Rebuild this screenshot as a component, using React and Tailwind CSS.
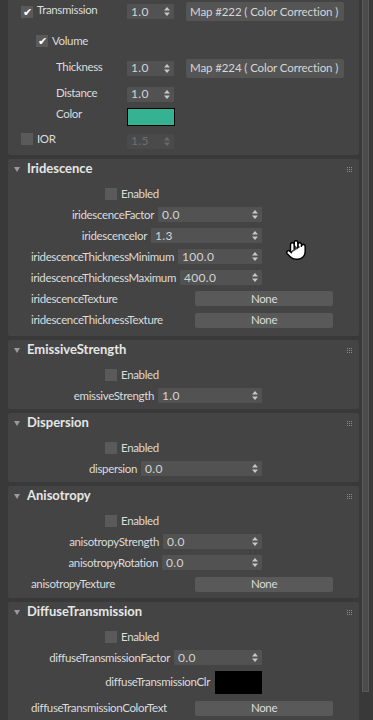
import React from "react";
import { Hand } from "lucide-react";

const font = { fontFamily: "Lato, 'Liberation Sans', sans-serif" };

function Arrows({ dim }) {
  return (
    <svg width="6" height="9" viewBox="0 0 6 9" className="shrink-0">
      <path d="M3 0 L6 3.5 L0 3.5 Z" fill={dim ? "#6a6a6a" : "#c8c8c8"} />
      <path d="M3 9 L6 5.5 L0 5.5 Z" fill={dim ? "#6a6a6a" : "#c8c8c8"} />
    </svg>
  );
}

function Spinner({ w, value, dim }) {
  return (
    <div
      className={`${w} h-[15px] flex items-center justify-between pl-[4px] pr-[4px] rounded-[1px] text-[12px] ${
        dim ? "text-[#6e6e6e] bg-[#4a4a4a]" : "text-[#d4d4d4] bg-[#525252]"
      }`}
    >
      <span className="leading-none tracking-[0.3px]">{value}</span>
      <Arrows dim={dim} />
    </div>
  );
}

function Check({ on }) {
  return (
    <div className="w-[12px] h-[12px] bg-[#5a5a5a] flex items-center justify-center shrink-0">
      {on && <span className="text-[11px] leading-none text-white -mt-[1px]">✔</span>}
    </div>
  );
}

function MapBtn({ children }) {
  return (
    <div className="w-[158px] h-[19px] bg-[#555555] rounded-[2px] flex items-center pl-[4px] text-[11.5px] tracking-[-0.1px] text-[#d6d6d6] whitespace-nowrap">
      {children}
    </div>
  );
}

function NoneBtn() {
  return (
    <div className="w-[138px] h-[15px] bg-[#595959] rounded-[2px] flex items-center justify-center text-[#dcdcdc]">
      None
    </div>
  );
}

function Grip() {
  return (
    <div className="grid grid-cols-3 gap-[1px] mr-[7px]">
      {Array.from({ length: 9 }).map((_, i) => (
        <div key={i} className="w-[1px] h-[1px] bg-[#8a8a8a]" />
      ))}
    </div>
  );
}

function Header({ title }) {
  return (
    <div className="h-[20px] flex items-center justify-between">
      <div className="flex items-center">
        <svg width="6" height="5" viewBox="0 0 6 5" className="ml-[6px] mr-[7px]">
          <path d="M0 0 L6 0 L3 5 Z" fill="#9a9a9a" />
        </svg>
        <span className="font-bold text-[13px] tracking-[0px] text-[#e6e6e6]">{title}</span>
      </div>
      <Grip />
    </div>
  );
}

function Enabled() {
  return (
    <div className="h-[20px] mt-[5px] flex items-center pl-[97px] gap-[4px]">
      <Check />
      <span>Enabled</span>
    </div>
  );
}

function SpinRow({ label, w, value }) {
  return (
    <div className="h-[21px] w-[254px] flex items-center justify-end gap-[4px]">
      <span className="whitespace-nowrap">{label}</span>
      <Spinner w={w} value={value} />
    </div>
  );
}

function TexRow({ label, h = "h-[21px]" }) {
  return (
    <div className={`${h} flex items-center`}>
      <span className="w-[187px] pl-[23px] whitespace-nowrap">{label}</span>
      <NoneBtn />
    </div>
  );
}

function Panel({ title, children, pb }) {
  return (
    <div className={`bg-[#444444] rounded-[2px] ${pb}`}>
      <Header title={title} />
      {children}
    </div>
  );
}

export default function App() {
  return (
    <div
      className="relative w-[373px] h-[720px] bg-[#393939] flex overflow-hidden text-[11.5px] tracking-[-0.35px] text-[#dcdcdc]"
      style={font}
    >
      <div className="w-[351px] ml-[8px] flex flex-col gap-[4px] shrink-0">
        {/* continued panel */}
        <div className="h-[155px] shrink-0 bg-[#444444] rounded-b-[2px]">
          <div className="h-[23px] flex items-center">
            <div className="w-[119px] pl-[13px] flex items-center gap-[4px]">
              <Check on />
              <span className="-mt-[3px]">Transmission</span>
            </div>
            <Spinner w="w-[47px]" value="1.0" />
            <div className="ml-[12px]">
              <MapBtn>Map #222 ( Color Correction )</MapBtn>
            </div>
          </div>
          <div className="h-[20px] mt-[8px] flex items-center pl-[28px] gap-[4px]">
            <Check on />
            <span>Volume</span>
          </div>
          <div className="h-[20px] mt-[7px] flex items-center">
            <span className="w-[119px] pl-[48px] -mt-[2px]">Thickness</span>
            <Spinner w="w-[47px]" value="1.0" />
            <div className="ml-[12px]">
              <MapBtn>Map #224 ( Color Correction )</MapBtn>
            </div>
          </div>
          <div className="h-[20px] mt-[6px] flex items-center">
            <span className="w-[119px] pl-[48px] -mt-[2px]">Distance</span>
            <Spinner w="w-[47px]" value="1.0" />
          </div>
          <div className="h-[26px] flex items-center">
            <span className="w-[119px] pl-[48px] -mt-[6px]">Color</span>
            <div className="w-[48px] h-[18px] bg-[#35b291] border border-black" />
          </div>
          <div className="h-[20px] mt-[1px] flex items-center">
            <div className="w-[119px] pl-[13px] flex items-center gap-[4px] -mt-[4px]">
              <Check />
              <span>IOR</span>
            </div>
            <Spinner w="w-[47px]" value="1.5" dim />
          </div>
        </div>

        <Panel title="Iridescence" pb="pb-[5px]">
          <Enabled />
          <SpinRow label="iridescenceFactor" w="w-[104px]" value="0.0" />
          <SpinRow label="iridescenceIor" w="w-[111px]" value="1.3" />
          <SpinRow label="iridescenceThicknessMinimum" w="w-[84px]" value="100.0" />
          <SpinRow label="iridescenceThicknessMaximum" w="w-[82px]" value="400.0" />
          <TexRow label="iridescenceTexture" />
          <TexRow label="iridescenceThicknessTexture" h="h-[22px]" />
        </Panel>

        <Panel title="EmissiveStrength" pb="pb-[3px]">
          <Enabled />
          <SpinRow label="emissiveStrength" w="w-[104px]" value="1.0" />
        </Panel>

        <Panel title="Dispersion" pb="pb-[3px]">
          <Enabled />
          <SpinRow label="dispersion" w="w-[121px]" value="0.0" />
        </Panel>

        <Panel title="Anisotropy" pb="pb-[3px]">
          <Enabled />
          <SpinRow label="anisotropyStrength" w="w-[99px]" value="0.0" />
          <SpinRow label="anisotropyRotation" w="w-[100px]" value="0.0" />
          <TexRow label="anisotropyTexture" h="h-[22px]" />
        </Panel>

        <Panel title="DiffuseTransmission" pb="pb-[4px]">
          <Enabled />
          <SpinRow label="diffuseTransmissionFactor" w="w-[88px]" value="0.0" />
          <div className="h-[28px] w-[254px] flex items-center justify-end gap-[5px]">
            <span>diffuseTransmissionClr</span>
            <div className="w-[47px] h-[23px] bg-black" />
          </div>
          <TexRow label="diffuseTransmissionColorText" h="h-[24px]" />
        </Panel>
      </div>

      <div className="w-[14px] shrink-0 pl-[3px]">
        <div className="w-[7px] h-[692px] bg-[#4c4c4c] border-x border-[#5a5a5a] border-b rounded-b-[1px]" />
      </div>

      <div className="absolute left-[285px] top-[239px]">
        <Hand size={22} fill="white" stroke="black" strokeWidth={1.6} />
      </div>
    </div>
  );
}
